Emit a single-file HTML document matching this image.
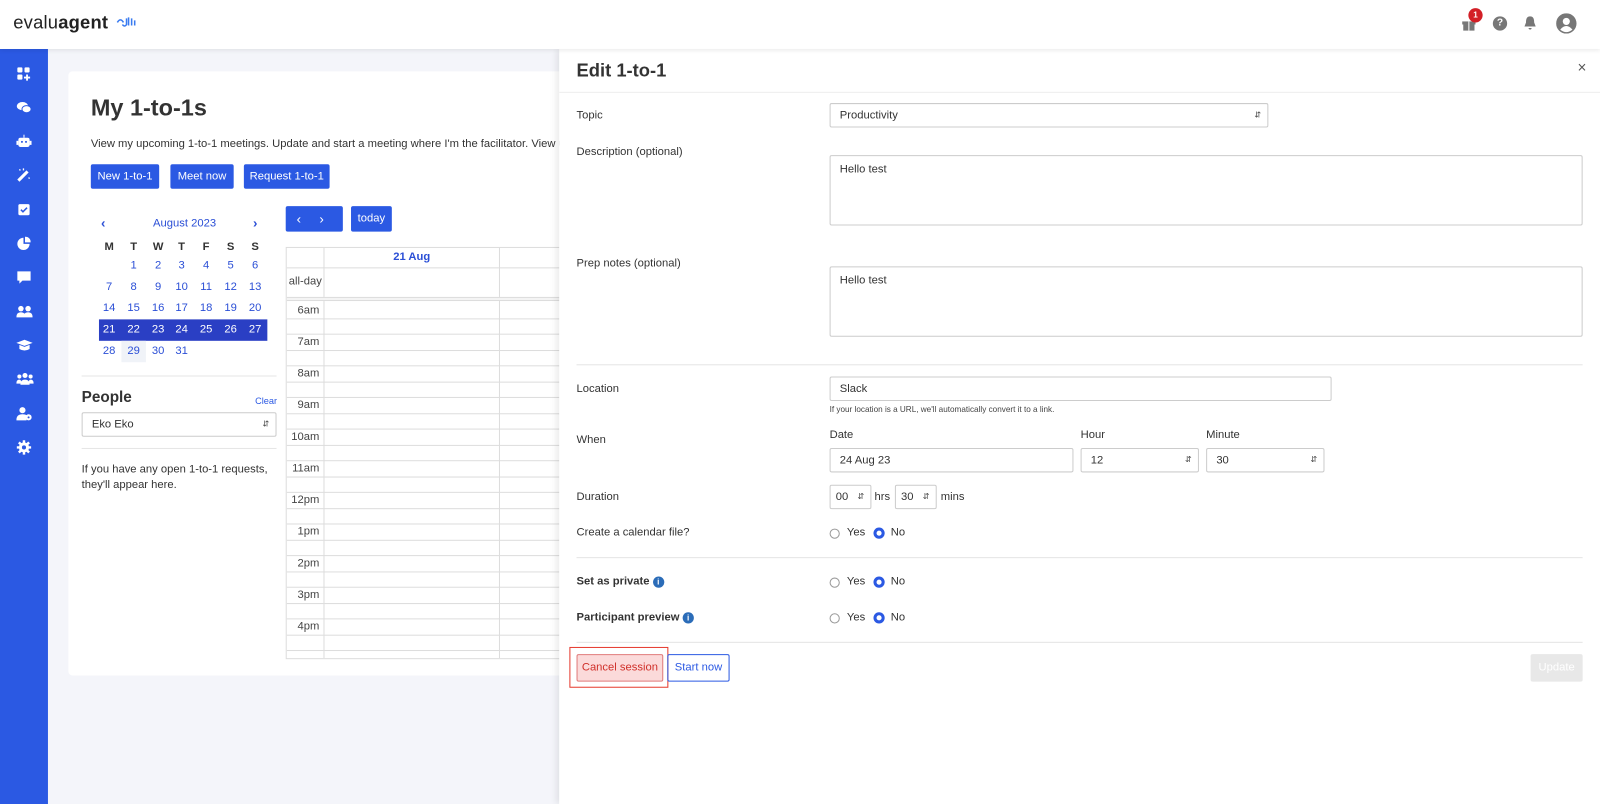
<!DOCTYPE html>
<html><head><meta charset="utf-8"><style>
*{box-sizing:border-box;margin:0;padding:0}
body{width:1600px;height:800px;overflow:hidden;background:#f4f5fa;font-family:"Liberation Sans",sans-serif;color:#333;position:relative;font-size:11px}
#w{position:absolute;left:0;top:0;width:1568px;height:784px;transform:scale(1.0204);transform-origin:0 0}
.a{position:absolute}
.hdr{left:0;top:0;width:1568px;height:48px;background:#fff;box-shadow:0 2px 4px rgba(0,0,0,.08);z-index:3}
.side{left:0;top:48px;width:47px;height:740px;background:#2b59e3}
.side svg{position:absolute;left:16px}
.card{left:67px;top:70px;width:500px;height:592px;background:#fff;border-radius:4px}
.btn{position:absolute;background:#2b59e3;color:#fff;border-radius:2px;font-size:11px;height:24px;line-height:24px;text-align:center}
.cal{color:#2b4fd6;font-size:11px;text-align:center;width:20px}
.panel{left:548px;top:48px;width:1020px;height:740px;background:#fff;box-shadow:-3px 0 6px rgba(0,0,0,.08);z-index:2}
.lbl{position:absolute;left:17px;font-size:11px;color:#333}
.inp{position:absolute;border:1px solid #ccc;border-radius:2px;background:#fff;font-size:11px;padding:0 9px;line-height:22px;color:#333}
.arr{position:absolute;right:6px;top:0;font-size:8px;color:#444}
.hr{position:absolute;left:17px;width:986px;height:1px;background:#e5e5e5}
.rad{position:absolute;width:10px;height:10px;border:1px solid #999;border-radius:50%}
.radon{position:absolute;width:11px;height:11px;border:3px solid #2b59e3;border-radius:50%;background:#fff}
.rt{position:absolute;font-size:11px;color:#333}
.tr{position:absolute;left:0;width:268px;height:1px;background:#ddd}
.tl{position:absolute;width:32px;text-align:right;font-size:11px;color:#444}
</style></head><body><div id="w">
<div class="a hdr">
 <div class="a" style="left:13px;top:12px;font-size:18px;letter-spacing:.2px;color:#222">evalu<b>agent</b></div>
 <svg class="a" style="left:114px;top:15px" width="20" height="14" viewBox="0 0 20 14"><path d="M1 7 q3-5 6 0 M6 9 q2 3 4 0 V3 M12 10 V2 M15 10 V3 M18 10 V5" stroke="#3a7bf0" stroke-width="1.5" fill="none"/></svg>
 <svg class="a" style="left:1432px;top:16px" width="15" height="15" viewBox="0 0 15 15"><rect x="1" y="5" width="13" height="3" fill="#777"/><rect x="2" y="8" width="11" height="6" fill="#777"/><rect x="7" y="5" width="1" height="9" fill="#fff"/></svg>
 <div class="a" style="left:1439px;top:8px;width:14px;height:14px;border-radius:50%;background:#d32027;color:#fff;font-size:8px;line-height:14px;text-align:center;font-weight:bold">1</div>
 <div class="a" style="left:1463px;top:16px;width:14px;height:14px;border-radius:50%;background:#777;color:#fff;font-size:10px;line-height:14px;text-align:center;font-weight:bold">?</div>
 <svg class="a" style="left:1493px;top:15px" width="13" height="16" viewBox="0 0 13 16"><path d="M6.5 1 C3 1 2.5 4 2.5 7 L1 11 H12 L10.5 7 C10.5 4 10 1 6.5 1Z M5 12.5 h3 a1.5 1.5 0 0 1-3 0z" fill="#777"/></svg>
 <svg class="a" style="left:1525px;top:13px" width="20" height="20" viewBox="0 0 20 20"><circle cx="10" cy="10" r="10" fill="#777"/><circle cx="10" cy="8" r="3.5" fill="#fff"/><path d="M4 16 q6-7 12 0 q-6 5-12 0z" fill="#fff"/></svg>
</div>
<div class="a side">
 <svg style="top:17px" width="15" height="15"><rect x="1" y="1" width="5" height="5" rx="1" fill="#fff"/><rect x="8" y="1" width="5" height="5" rx="1" fill="#fff"/><rect x="1" y="8" width="5" height="5" rx="1" fill="#fff"/><path d="M10.5 8v6M7.5 11h6" stroke="#fff" stroke-width="1.8"/></svg>
 <svg style="top:50px" width="15" height="15"><ellipse cx="6" cy="6" rx="5.5" ry="4" fill="#fff"/><ellipse cx="10" cy="9" rx="4.5" ry="3.5" fill="#fff" stroke="#2b59e3"/></svg>
 <svg style="top:83px" width="15" height="15"><rect x="2" y="4" width="11" height="9" rx="2" fill="#fff"/><rect x="0" y="7" width="2" height="4" fill="#fff"/><rect x="13" y="7" width="2" height="4" fill="#fff"/><rect x="7" y="1" width="1" height="3" fill="#fff"/><circle cx="5.5" cy="8" r="1" fill="#2b59e3"/><circle cx="9.5" cy="8" r="1" fill="#2b59e3"/></svg>
 <svg style="top:116px" width="15" height="15"><path d="M2 13 L11 4" stroke="#fff" stroke-width="3"/><path d="M3 2 l1 1M12 10l1 1M7 1v2" stroke="#fff" stroke-width="1.3"/></svg>
 <svg style="top:150px" width="15" height="15"><rect x="2" y="2" width="11" height="11" rx="1.5" fill="#fff"/><path d="M4.5 7.5l2 2 4-4" stroke="#2b59e3" stroke-width="1.5" fill="none"/></svg>
 <svg style="top:183px" width="15" height="15"><path d="M7 2 A6 6 0 1 0 13 8 H7Z" fill="#fff"/><path d="M8.5 1 A5 5 0 0 1 14 6.5 H8.5Z" fill="#fff"/></svg>
 <svg style="top:216px" width="15" height="15"><path d="M1 2 h13 v9 h-8 l-3 3 v-3 h-2z" fill="#fff"/></svg>
 <svg style="top:250px" width="16" height="15"><circle cx="4.5" cy="4.5" r="2.7" fill="#fff"/><circle cx="11.5" cy="4.5" r="2.7" fill="#fff"/><path d="M0 13 q0-5 4.5-5 q4.5 0 4.5 5z M7 13 q0-5 4.5-5 q4.5 0 4.5 5z" fill="#fff"/></svg>
 <svg style="top:283px" width="16" height="15"><path d="M0 5 L8 2 L16 5 L8 8Z" fill="#fff"/><path d="M3 7 v4 q5 3 10 0 v-4 l-5 2z" fill="#fff"/></svg>
 <svg style="top:316px" width="17" height="15"><circle cx="8.5" cy="4" r="2.5" fill="#fff"/><circle cx="3" cy="5" r="2" fill="#fff"/><circle cx="14" cy="5" r="2" fill="#fff"/><path d="M4 13 q0-5 4.5-5 q4.5 0 4.5 5z M0 12 q0-4 3-4 q2 0 2 4z M12 12 q0-4 2-4 q3 0 3 4z" fill="#fff"/></svg>
 <svg style="top:350px" width="16" height="15"><circle cx="6" cy="4" r="3" fill="#fff"/><path d="M0 14 q0-6 6-6 q3 0 4 1 v5z" fill="#fff"/><circle cx="12" cy="11" r="3" fill="#fff"/><circle cx="12" cy="11" r="1" fill="#2b59e3"/></svg>
 <svg style="top:383px" width="15" height="15"><circle cx="7.5" cy="7.5" r="5" fill="#fff"/><path d="M7.5 0.5v14M0.5 7.5h14M2.5 2.5l10 10M12.5 2.5l-10 10" stroke="#fff" stroke-width="2.4"/><circle cx="7.5" cy="7.5" r="2" fill="#2b59e3"/></svg>
</div>

<div class="a card">
 <div class="a" style="left:22px;top:22px;font-size:23px;font-weight:bold;color:#333">My 1-to-1s</div>
 <div class="a" style="left:22px;top:65px;font-size:11px;color:#333;white-space:nowrap">View my upcoming 1-to-1 meetings. Update and start a meeting where I'm the facilitator. View upcoming</div>
 <div class="btn" style="left:22px;top:91px;width:67px">New 1-to-1</div>
 <div class="btn" style="left:100px;top:91px;width:62px">Meet now</div>
 <div class="btn" style="left:172px;top:91px;width:84px">Request 1-to-1</div>
 <div class="a" style="left:32px;top:141px;color:#2b4fd6;font-size:13px;font-weight:bold">&#8249;</div>
 <div class="a" style="left:83px;top:143px;color:#2b4fd6;font-size:11px">August 2023</div>
 <div class="a" style="left:181px;top:141px;color:#2b4fd6;font-size:13px;font-weight:bold">&#8250;</div>
 <div class="a" style="left:30px;top:243px;width:165px;height:21px;background:#2a3fc4"></div>
 <div class="a" style="left:52px;top:264px;width:24px;height:21px;background:#f0f3f8"></div>
 <div class="a" style="left:0;top:0">
  <div class="a cal" style="left:30px;top:166px;color:#333;font-weight:bold">M</div><div class="a cal" style="left:54px;top:166px;color:#333;font-weight:bold">T</div><div class="a cal" style="left:78px;top:166px;color:#333;font-weight:bold">W</div><div class="a cal" style="left:101px;top:166px;color:#333;font-weight:bold">T</div><div class="a cal" style="left:125px;top:166px;color:#333;font-weight:bold">F</div><div class="a cal" style="left:149px;top:166px;color:#333;font-weight:bold">S</div><div class="a cal" style="left:173px;top:166px;color:#333;font-weight:bold">S</div>
  <div class="a cal" style="left:54px;top:184px">1</div><div class="a cal" style="left:78px;top:184px">2</div><div class="a cal" style="left:101px;top:184px">3</div><div class="a cal" style="left:125px;top:184px">4</div><div class="a cal" style="left:149px;top:184px">5</div><div class="a cal" style="left:173px;top:184px">6</div>
  <div class="a cal" style="left:30px;top:205px">7</div><div class="a cal" style="left:54px;top:205px">8</div><div class="a cal" style="left:78px;top:205px">9</div><div class="a cal" style="left:101px;top:205px">10</div><div class="a cal" style="left:125px;top:205px">11</div><div class="a cal" style="left:149px;top:205px">12</div><div class="a cal" style="left:173px;top:205px">13</div>
  <div class="a cal" style="left:30px;top:226px">14</div><div class="a cal" style="left:54px;top:226px">15</div><div class="a cal" style="left:78px;top:226px">16</div><div class="a cal" style="left:101px;top:226px">17</div><div class="a cal" style="left:125px;top:226px">18</div><div class="a cal" style="left:149px;top:226px">19</div><div class="a cal" style="left:173px;top:226px">20</div>
  <div class="a cal" style="left:30px;top:247px;color:#fff">21</div><div class="a cal" style="left:54px;top:247px;color:#fff">22</div><div class="a cal" style="left:78px;top:247px;color:#fff">23</div><div class="a cal" style="left:101px;top:247px;color:#fff">24</div><div class="a cal" style="left:125px;top:247px;color:#fff">25</div><div class="a cal" style="left:149px;top:247px;color:#fff">26</div><div class="a cal" style="left:173px;top:247px;color:#fff">27</div>
  <div class="a cal" style="left:30px;top:268px">28</div><div class="a cal" style="left:54px;top:268px">29</div><div class="a cal" style="left:78px;top:268px">30</div><div class="a cal" style="left:101px;top:268px">31</div>
 </div>
 <div class="a" style="left:13px;top:298px;width:191px;height:1px;background:#e5e5e5"></div>
 <div class="a" style="left:13px;top:311px;font-size:15px;font-weight:bold;color:#333">People</div>
 <div class="a" style="left:183px;top:318px;font-size:9px;color:#2b59e3">Clear</div>
 <div class="inp" style="left:13px;top:334px;width:191px;height:24px">Eko Eko<span class="arr">&#8693;</span></div>
 <div class="a" style="left:13px;top:369px;width:191px;height:1px;background:#e5e5e5"></div>
 <div class="a" style="left:13px;top:383px;font-size:11px;line-height:15px;color:#333">If you have any open 1-to-1 requests,<br>they'll appear here.</div>
 <div class="btn" style="left:213px;top:132px;width:56px;height:25px;line-height:25px;font-size:13px;letter-spacing:18px;padding-left:10px">&#8249;&#8250;</div>
 <div class="btn" style="left:277px;top:132px;width:40px;height:25px;line-height:25px">today</div>
 <div class="a" style="left:213px;top:172px;width:280px;height:404px;border:1px solid #ddd;overflow:hidden">
  <div class="a" style="left:36px;top:0;width:1px;height:404px;background:#ddd"></div>
  <div class="a" style="left:208px;top:0;width:1px;height:404px;background:#ddd"></div>
  <div class="a" style="left:37px;top:3px;width:171px;text-align:center;color:#2b4fd6;font-weight:bold;font-size:11px">21 Aug</div>
  <div class="tr" style="top:19px"></div>
  <div class="a" style="left:2px;top:27px;font-size:11px;color:#444">all-day</div>
  <div class="a" style="left:0;top:48px;width:280px;height:4px;border-top:1px solid #ddd;border-bottom:1px solid #ddd;background:#f4f4f4"></div>
  <div class="tl" style="left:0;top:55px">6am</div><div class="tr" style="top:69px"></div><div class="tr" style="top:84px"></div>
  <div class="tl" style="left:0;top:86px">7am</div><div class="tr" style="top:100px"></div><div class="tr" style="top:115px"></div>
  <div class="tl" style="left:0;top:117px">8am</div><div class="tr" style="top:131px"></div><div class="tr" style="top:146px"></div>
  <div class="tl" style="left:0;top:148px">9am</div><div class="tr" style="top:162px"></div><div class="tr" style="top:177px"></div>
  <div class="tl" style="left:0;top:179px">10am</div><div class="tr" style="top:193px"></div><div class="tr" style="top:208px"></div>
  <div class="tl" style="left:0;top:210px">11am</div><div class="tr" style="top:224px"></div><div class="tr" style="top:239px"></div>
  <div class="tl" style="left:0;top:241px">12pm</div><div class="tr" style="top:255px"></div><div class="tr" style="top:270px"></div>
  <div class="tl" style="left:0;top:272px">1pm</div><div class="tr" style="top:286px"></div><div class="tr" style="top:301px"></div>
  <div class="tl" style="left:0;top:303px">2pm</div><div class="tr" style="top:317px"></div><div class="tr" style="top:332px"></div>
  <div class="tl" style="left:0;top:334px">3pm</div><div class="tr" style="top:348px"></div><div class="tr" style="top:363px"></div>
  <div class="tl" style="left:0;top:365px">4pm</div><div class="tr" style="top:379px"></div><div class="tr" style="top:394px"></div>
 </div>
</div>

<div class="a panel">
 <div class="a" style="left:17px;top:11px;font-size:18px;font-weight:bold;color:#333">Edit 1-to-1</div>
 <div class="a" style="left:998px;top:10px;font-size:15px;color:#555">&#215;</div>
 <div class="a" style="left:0;top:42px;width:1020px;height:1px;background:#eee"></div>
 <div class="lbl" style="top:59px">Topic</div>
 <div class="inp" style="left:265px;top:53px;width:430px;height:24px">Productivity<span class="arr">&#8693;</span></div>
 <div class="lbl" style="top:95px">Description (optional)</div>
 <div class="inp" style="left:265px;top:104px;width:738px;height:69px;padding-top:2px">Hello test</div>
 <div class="lbl" style="top:204px">Prep notes (optional)</div>
 <div class="inp" style="left:265px;top:213px;width:738px;height:69px;padding-top:2px">Hello test</div>
 <div class="hr" style="top:309px"></div>
 <div class="lbl" style="top:327px">Location</div>
 <div class="inp" style="left:265px;top:321px;width:492px;height:24px">Slack</div>
 <div class="a" style="left:265px;top:349px;font-size:8px;color:#444">If your location is a URL, we'll automatically convert it to a link.</div>
 <div class="lbl" style="top:377px">When</div>
 <div class="a" style="left:265px;top:372px;font-size:11px">Date</div>
 <div class="a" style="left:511px;top:372px;font-size:11px">Hour</div>
 <div class="a" style="left:634px;top:372px;font-size:11px">Minute</div>
 <div class="inp" style="left:265px;top:391px;width:239px;height:24px">24 Aug 23</div>
 <div class="inp" style="left:511px;top:391px;width:116px;height:24px">12<span class="arr">&#8693;</span></div>
 <div class="inp" style="left:634px;top:391px;width:116px;height:24px">30<span class="arr">&#8693;</span></div>
 <div class="lbl" style="top:433px">Duration</div>
 <div class="inp" style="left:265px;top:427px;width:41px;height:24px;padding:0 5px">00<span class="arr">&#8693;</span></div>
 <div class="a" style="left:309px;top:433px">hrs</div>
 <div class="inp" style="left:329px;top:427px;width:41px;height:24px;padding:0 5px">30<span class="arr">&#8693;</span></div>
 <div class="a" style="left:374px;top:433px">mins</div>
 <div class="lbl" style="top:468px">Create a calendar file?</div>
 <div class="rad" style="left:265px;top:470px"></div><div class="rt" style="left:282px;top:468px">Yes</div><div class="radon" style="left:308px;top:469px"></div><div class="rt" style="left:325px;top:468px">No</div>
 <div class="hr" style="top:498px"></div>
 <div class="lbl" style="top:516px;font-weight:bold">Set as private <span style="display:inline-block;width:11px;height:11px;border-radius:50%;background:#2b6cb8;color:#fff;font-size:8px;text-align:center;line-height:11px">i</span></div>
 <div class="rad" style="left:265px;top:518px"></div><div class="rt" style="left:282px;top:516px">Yes</div><div class="radon" style="left:308px;top:517px"></div><div class="rt" style="left:325px;top:516px">No</div>
 <div class="lbl" style="top:551px;font-weight:bold">Participant preview <span style="display:inline-block;width:11px;height:11px;border-radius:50%;background:#2b6cb8;color:#fff;font-size:8px;text-align:center;line-height:11px">i</span></div>
 <div class="rad" style="left:265px;top:553px"></div><div class="rt" style="left:282px;top:551px">Yes</div><div class="radon" style="left:308px;top:552px"></div><div class="rt" style="left:325px;top:551px">No</div>
 <div class="hr" style="top:581px"></div>
 <div class="a" style="left:10px;top:586px;width:97px;height:40px;border:1.5px solid #e53a2e"></div>
 <div class="a" style="left:17px;top:593px;width:85px;height:27px;background:#fbdada;border:1px solid #e07a7a;border-radius:2px;color:#d0302a;text-align:center;line-height:25px">Cancel session</div>
 <div class="a" style="left:106px;top:593px;width:61px;height:27px;border:1px solid #2b59e3;border-radius:2px;color:#2b59e3;text-align:center;line-height:25px">Start now</div>
 <div class="a" style="left:952px;top:593px;width:51px;height:27px;background:#e8e8e8;border-radius:2px;color:#fff;text-align:center;line-height:27px">Update</div>
</div>
</div></body></html>
